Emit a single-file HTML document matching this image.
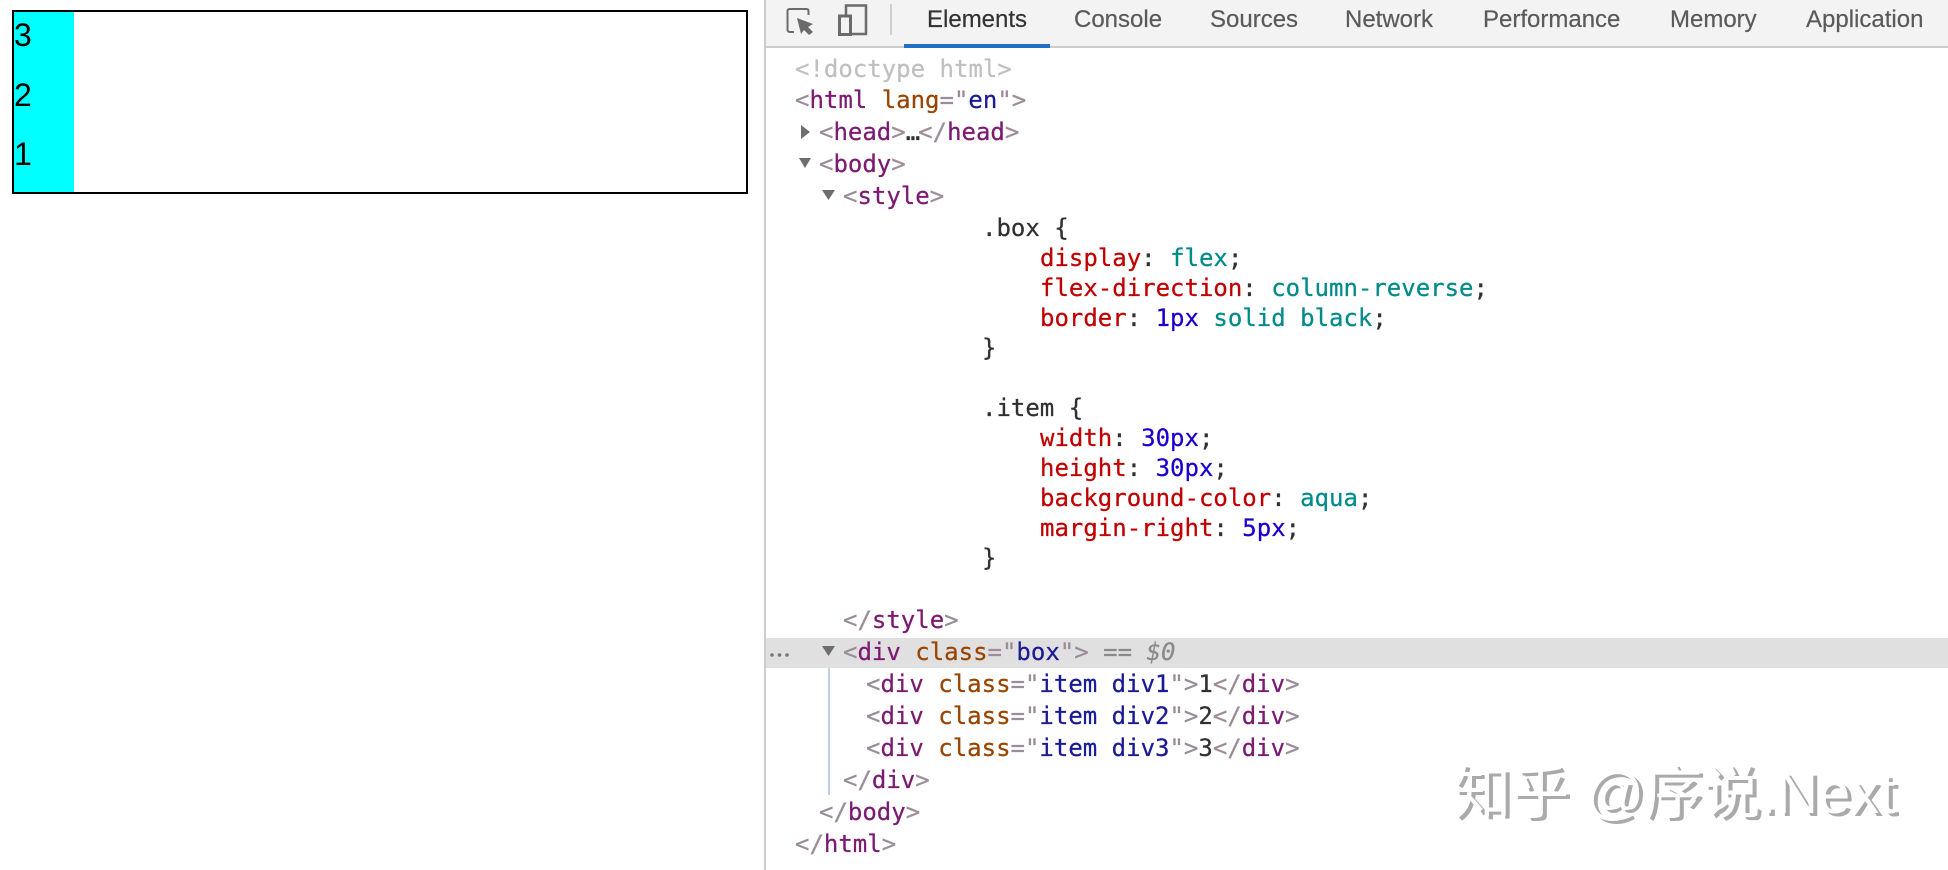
<!DOCTYPE html>
<html lang="en">
<head>
<meta charset="utf-8">
<title>Flex column-reverse</title>
<style>
html,body{margin:0;padding:0;background:#fff;}
body{position:relative;width:1948px;height:870px;overflow:hidden;font-family:"Liberation Sans",sans-serif;}
.box{position:absolute;left:12px;top:10px;width:732px;height:180px;border:2px solid #000;}
.cy{position:absolute;left:0;top:0;width:60px;height:180px;background:#0ff;}
.d{position:absolute;left:14px;font-size:32px;line-height:37px;color:#000;}
.sep{position:absolute;left:764px;top:0;width:2px;height:870px;background:#ccc;}
.bar{position:absolute;left:766px;top:0;width:1182px;height:46px;background:#f3f3f3;border-bottom:2px solid #ccc;}
.tab{position:absolute;top:4px;font-size:24px;line-height:32px;color:#5a5a5a;white-space:nowrap;-webkit-text-stroke:.2px;}
.ul{position:absolute;left:904px;top:44px;width:146px;height:4px;background:#1f6fc4;}
.l{position:absolute;height:32px;line-height:32px;font-family:"DejaVu Sans Mono","Liberation Mono",monospace;font-size:24px;white-space:pre;color:#303030;-webkit-text-stroke:.25px;}
.t{color:#7c1a72}.b{color:#9c8c9a}.a{color:#994500}.v{color:#1a1a96}
.p{color:#c00000}.k{color:#008b8b}.n{color:#1c00cf}.g{color:#c0c0c0}.e{color:#8a8a8a}
.hl{position:absolute;left:766px;top:638px;width:1182px;height:30px;background:#e0e0e0;}
.tree{position:absolute;left:828px;top:668px;width:2px;height:127px;background:#bcd0e4;}
.wm{position:absolute;left:1453px;top:759px;font-family:"Liberation Sans","Noto Sans CJK SC",sans-serif;font-size:58px;line-height:70px;color:#fff;text-shadow:4px 3px 0 #aaa;white-space:nowrap;}
svg{position:absolute;overflow:visible;}
</style>
</head>
<body>
<div class="box"><div class="cy"></div></div>
<div class="d" style="top:17px">3</div>
<div class="d" style="top:77px">2</div>
<div class="d" style="top:136px">1</div>

<div class="sep"></div>
<div class="bar"></div>
<svg style="left:0;top:0" width="1" height="1">
  <path d="M794 32H790Q787.500 32 787.500 29.500V11Q787.500 9 790 9H806.500Q808.500 9 808.500 11V15" fill="none" stroke="#6b6b6b" stroke-width="2"/>
  <path d="M797 18L813 24L808 27L813 32L809 35L804 30L801 34Z" fill="#6b6b6b"/>
  <path d="M846 15V5.500H866V34H851" fill="none" stroke="#6b6b6b" stroke-width="2.500"/>
  <rect x="839.500" y="16" width="11" height="18.500" fill="none" stroke="#6b6b6b" stroke-width="3"/>
  <rect x="890" y="4" width="2" height="31" fill="#cfcfcf"/>
</svg>
<div class="tab" style="left:927px;color:#333">Elements</div>
<div class="tab" style="left:1074px">Console</div>
<div class="tab" style="left:1210px">Sources</div>
<div class="tab" style="left:1345px">Network</div>
<div class="tab" style="left:1483px">Performance</div>
<div class="tab" style="left:1670px">Memory</div>
<div class="tab" style="left:1806px">Application</div>
<div class="ul"></div>

<div class="hl"></div>
<div class="tree"></div>
<svg style="left:0;top:0" width="1" height="1">
  <path d="M801 125L810 132L801 139Z" fill="#6e6e6e"/>
  <path d="M799 158H811L805 168Z" fill="#6e6e6e"/>
  <path d="M822 190H835L828.500 200Z" fill="#6e6e6e"/>
  <path d="M822 646H835L828.500 656Z" fill="#6e6e6e"/>
  <circle cx="772" cy="655" r="1.800" fill="#777"/><circle cx="779.500" cy="655" r="1.800" fill="#777"/><circle cx="787" cy="655" r="1.800" fill="#777"/>
</svg>

<div class="l g" style="left:795px;top:53px">&lt;!doctype html&gt;</div>
<div class="l" style="left:795px;top:84px"><span class="b">&lt;</span><span class="t">html</span> <span class="a">lang</span><span class="b">="</span><span class="v">en</span><span class="b">"&gt;</span></div>
<div class="l" style="left:819px;top:116px"><span class="b">&lt;</span><span class="t">head</span><span class="b">&gt;</span><span style="letter-spacing:-2px">…</span><span class="b">&lt;/</span><span class="t">head</span><span class="b">&gt;</span></div>
<div class="l" style="left:819px;top:148px"><span class="b">&lt;</span><span class="t">body</span><span class="b">&gt;</span></div>
<div class="l" style="left:843px;top:180px"><span class="b">&lt;</span><span class="t">style</span><span class="b">&gt;</span></div>

<div class="l" style="left:982px;top:212px">.box {</div>
<div class="l" style="left:1040px;top:242px"><span class="p">display</span>: <span class="k">flex</span>;</div>
<div class="l" style="left:1040px;top:272px"><span class="p">flex-direction</span>: <span class="k">column-reverse</span>;</div>
<div class="l" style="left:1040px;top:302px"><span class="p">border</span>: <span class="n">1px</span> <span class="k">solid black</span>;</div>
<div class="l" style="left:982px;top:332px">}</div>
<div class="l" style="left:982px;top:392px">.item {</div>
<div class="l" style="left:1040px;top:422px"><span class="p">width</span>: <span class="n">30px</span>;</div>
<div class="l" style="left:1040px;top:452px"><span class="p">height</span>: <span class="n">30px</span>;</div>
<div class="l" style="left:1040px;top:482px"><span class="p">background-color</span>: <span class="k">aqua</span>;</div>
<div class="l" style="left:1040px;top:512px"><span class="p">margin-right</span>: <span class="n">5px</span>;</div>
<div class="l" style="left:982px;top:542px">}</div>

<div class="l" style="left:843px;top:604px"><span class="b">&lt;/</span><span class="t">style</span><span class="b">&gt;</span></div>
<div class="l" style="left:843px;top:636px"><span class="b">&lt;</span><span class="t">div</span> <span class="a">class</span><span class="b">="</span><span class="v">box</span><span class="b">"&gt;</span> <span class="e">==</span> <span class="e" style="font-style:italic">$0</span></div>
<div class="l" style="left:866px;top:668px"><span class="b">&lt;</span><span class="t">div</span> <span class="a">class</span><span class="b">="</span><span class="v">item div1</span><span class="b">"&gt;</span>1<span class="b">&lt;/</span><span class="t">div</span><span class="b">&gt;</span></div>
<div class="l" style="left:866px;top:700px"><span class="b">&lt;</span><span class="t">div</span> <span class="a">class</span><span class="b">="</span><span class="v">item div2</span><span class="b">"&gt;</span>2<span class="b">&lt;/</span><span class="t">div</span><span class="b">&gt;</span></div>
<div class="l" style="left:866px;top:732px"><span class="b">&lt;</span><span class="t">div</span> <span class="a">class</span><span class="b">="</span><span class="v">item div3</span><span class="b">"&gt;</span>3<span class="b">&lt;/</span><span class="t">div</span><span class="b">&gt;</span></div>
<div class="l" style="left:843px;top:764px"><span class="b">&lt;/</span><span class="t">div</span><span class="b">&gt;</span></div>
<div class="l" style="left:819px;top:796px"><span class="b">&lt;/</span><span class="t">body</span><span class="b">&gt;</span></div>
<div class="l" style="left:795px;top:828px"><span class="b">&lt;/</span><span class="t">html</span><span class="b">&gt;</span></div>

<div class="wm">知乎 @序说.Next</div>
</body>
</html>
